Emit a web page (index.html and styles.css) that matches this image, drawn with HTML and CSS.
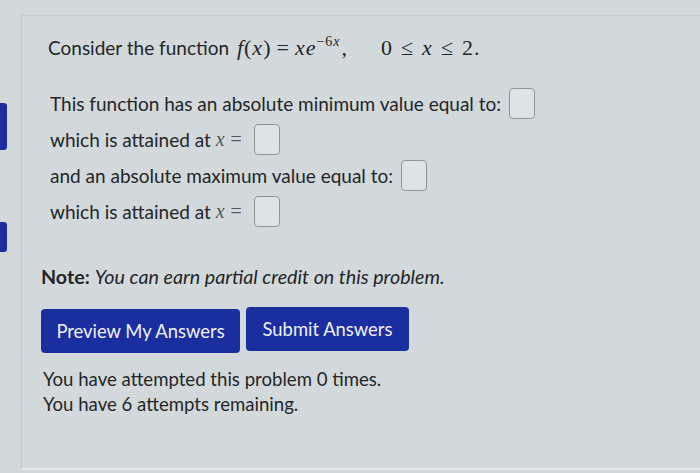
FILE: index.html
```html
<!DOCTYPE html>
<html>
<head>
<meta charset="utf-8">
<link rel="stylesheet" href="styles.css">
</head>
<body>
<div class="page">
  <div class="rail">
    <div class="tab tab-a"></div>
    <div class="tab tab-b"></div>
  </div>
  <div class="frame">
    <div class="problem">
      <p class="intro">Consider the function <span class="math fn"><i>f</i>(<i>x</i>)<span class="op">=</span><i>xe</i><sup>−6<i>x</i></sup>,<span class="sp"></span>0<span class="op le">≤</span><i>x</i><span class="op le">≤</span>2.</span></p>
      <div class="rows">
        <div class="row">This function has an absolute minimum value equal to:<span class="box"></span></div>
        <div class="row">which is attained at <span class="math eq"><i>x</i><span class="op">=</span></span><span class="box"></span></div>
        <div class="row">and an absolute maximum value equal to:<span class="box"></span></div>
        <div class="row">which is attained at <span class="math eq"><i>x</i><span class="op">=</span></span><span class="box"></span></div>
      </div>
    </div>
    <p class="note"><b>Note:</b> <i>You can earn partial credit on this problem.</i></p>
    <div class="buttons">
      <button class="btn btn-preview">Preview My Answers</button>
      <button class="btn btn-submit">Submit Answers</button>
    </div>
    <div class="attempts">
      <p>You have attempted this problem 0 times.</p>
      <p>You have 6 attempts remaining.</p>
    </div>
  </div>
</div>
</body>
</html>
```
FILE: styles.css
```css
html, body {
  margin: 0;
  padding: 0;
}
body {
  width: 700px;
  height: 473px;
  overflow: hidden;
  background: #d3d9da;
  font-family: Lato, "Open Sans", sans-serif;
  color: #222629;
}
.page {
  display: flex;
  height: 473px;
}
.rail {
  width: 7px;
  display: flex;
  flex-direction: column;
}
.tab {
  background: #1c2d9c;
  border-radius: 0 3px 3px 0;
}
.tab-a {
  margin-top: 103px;
  height: 47px;
}
.tab-b {
  margin-top: 72px;
  height: 30px;
}
.frame {
  flex: 1;
  margin-left: 14px;
  margin-top: 15px;
  margin-bottom: 3px;
  border-left: 1px solid #c2c8ca;
  border-top: 1px solid #c6cccd;
  border-bottom: 2px solid #e6eaea;
  padding-left: 19px;
}
.problem {
  padding-left: 7px;
}
p {
  margin: 0;
}
.intro {
  font-size: 19px;
  margin-top: 18px;
  height: 28px;
  line-height: 28px;
  white-space: nowrap;
}
.math {
  font-family: "Liberation Serif", "DejaVu Serif", serif;
  font-size: 22px;
  letter-spacing: 1px;
}
.fn {
  margin-left: 3px;
}
.math i {
  font-style: italic;
}
.op {
  margin: 0 5px;
}
.le {
  margin: 0 8px;
}
.math sup {
  font-size: 14px;
  vertical-align: 9px;
  line-height: 0;
  margin-right: 1px;
}
.sp {
  display: inline-block;
  width: 33px;
}
.rows {
  margin-top: 23px;
  padding-left: 2px;
}
.row {
  display: flex;
  align-items: center;
  height: 36px;
  font-size: 19px;
  white-space: pre;
}
.eq {
  font-size: 20px;
  color: #50555a;
}
.box {
  display: inline-block;
  width: 24px;
  height: 29px;
  border: 1.5px solid #8f9597;
  border-radius: 4px;
  margin-left: 8px;
  background: #dde2e3;
}
.eq + .box {
  margin-left: 6px;
}
.note {
  font-size: 19.7px;
  margin-top: 36px;
}
.note b {
  font-weight: 700;
}
.buttons {
  display: flex;
  gap: 6px;
  margin-top: 19px;
  align-items: flex-start;
}
.btn {
  background: #1a2e9f;
  color: #eef0f8;
  border: none;
  border-radius: 4px;
  font-family: Lato, "Open Sans", sans-serif;
  font-size: 18.4px;
  height: 44px;
  padding: 0;
}
.btn-preview {
  width: 199px;
  margin-top: 2px;
}
.btn-submit {
  width: 163px;
}
.attempts {
  margin-top: 14px;
  font-size: 18.6px;
  line-height: 25px;
  padding-left: 2px;
}
```
